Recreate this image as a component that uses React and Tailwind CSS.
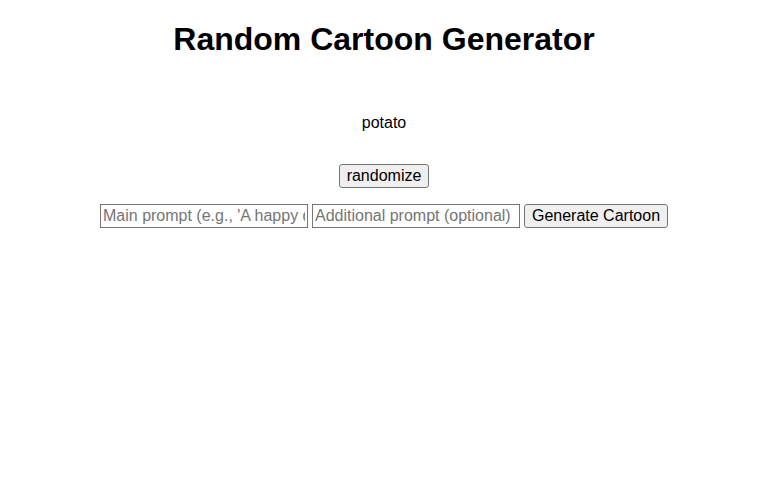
import React, { useState } from 'react';

const App = () => {
  const [main, setMain] = useState('');
  const [extra, setExtra] = useState('');

  return (
    <div className="min-h-[480px] bg-white text-black text-center font-['Liberation_Sans',Arial,sans-serif]">
      <h1 className="pt-[21px] text-[32px] font-bold leading-[37px]">Random Cartoon Generator</h1>

      {/* Current pick */}
      <p className="mt-[56px] text-base leading-[18px]">potato</p>

      <div className="mt-[32px] flex justify-center">
        <button className="h-6 px-[7px] bg-[#efefef] border border-[#767676] rounded-[3px] text-base leading-[18px]">
          randomize
        </button>
      </div>

      <div className="mt-4 flex justify-center gap-1">
        <input
          value={main}
          onChange={(e) => setMain(e.target.value)}
          placeholder="Main prompt (e.g., 'A happy dog')"
          className="w-[208px] h-6 px-[2px] border border-[#767676] text-base leading-[18px] placeholder:text-[#757575] outline-none"
        />
        <input
          value={extra}
          onChange={(e) => setExtra(e.target.value)}
          placeholder="Additional prompt (optional)"
          className="w-[208px] h-6 px-[2px] border border-[#767676] text-base leading-[18px] placeholder:text-[#757575] outline-none"
        />
        <button className="h-6 w-[144px] bg-[#efefef] border border-[#767676] rounded-[3px] text-base leading-[18px]">
          Generate Cartoon
        </button>
      </div>
    </div>
  );
};

export default App;
